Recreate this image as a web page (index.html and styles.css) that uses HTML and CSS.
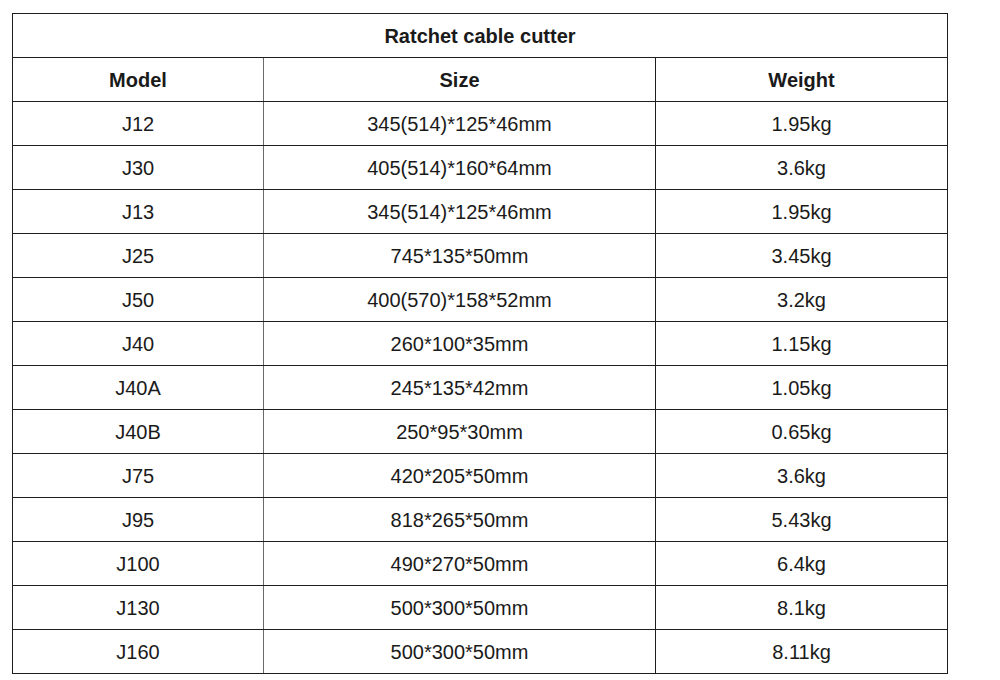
FILE: index.html
```html
<!DOCTYPE html>
<html>
<head>
<meta charset="utf-8">
<link rel="stylesheet" href="styles.css">
</head>
<body>
<table class="spec">
  <colgroup>
    <col class="c1"><col class="c2"><col class="c3">
  </colgroup>
  <tr><th colspan="3" class="title">Ratchet cable cutter</th></tr>
  <tr><th>Model</th><th>Size</th><th>Weight</th></tr>
  <tr><td>J12</td><td>345(514)*125*46mm</td><td>1.95kg</td></tr>
  <tr><td>J30</td><td>405(514)*160*64mm</td><td>3.6kg</td></tr>
  <tr><td>J13</td><td>345(514)*125*46mm</td><td>1.95kg</td></tr>
  <tr><td>J25</td><td>745*135*50mm</td><td>3.45kg</td></tr>
  <tr><td>J50</td><td>400(570)*158*52mm</td><td>3.2kg</td></tr>
  <tr><td>J40</td><td>260*100*35mm</td><td>1.15kg</td></tr>
  <tr><td>J40A</td><td>245*135*42mm</td><td>1.05kg</td></tr>
  <tr><td>J40B</td><td>250*95*30mm</td><td>0.65kg</td></tr>
  <tr><td>J75</td><td>420*205*50mm</td><td>3.6kg</td></tr>
  <tr><td>J95</td><td>818*265*50mm</td><td>5.43kg</td></tr>
  <tr><td>J100</td><td>490*270*50mm</td><td>6.4kg</td></tr>
  <tr><td>J130</td><td>500*300*50mm</td><td>8.1kg</td></tr>
  <tr><td>J160</td><td>500*300*50mm</td><td>8.11kg</td></tr>
</table>
</body>
</html>
```
FILE: styles.css
```css
html, body {
  margin: 0;
  padding: 0;
  background: #ffffff;
}
body {
  padding: 13px 0 0 12px;
  font-family: "Liberation Sans", Arial, sans-serif;
  color: #1a1a1a;
}
.spec {
  border-collapse: collapse;
  table-layout: fixed;
  width: 935px;
}
.c1 { width: 251px; }
.c2 { width: 392px; }
.c3 { width: 292px; }
.spec th, .spec td {
  border: 1px solid #1e1e1e;
  height: 43px;
  padding: 0;
  text-align: center;
  vertical-align: middle;
  font-size: 20px;
  line-height: 24px;
}
.spec th {
  font-weight: bold;
}
.spec td:first-child, .spec th:first-child:not(.title) {
  border-right-color: #6a6a6a;
}
```
